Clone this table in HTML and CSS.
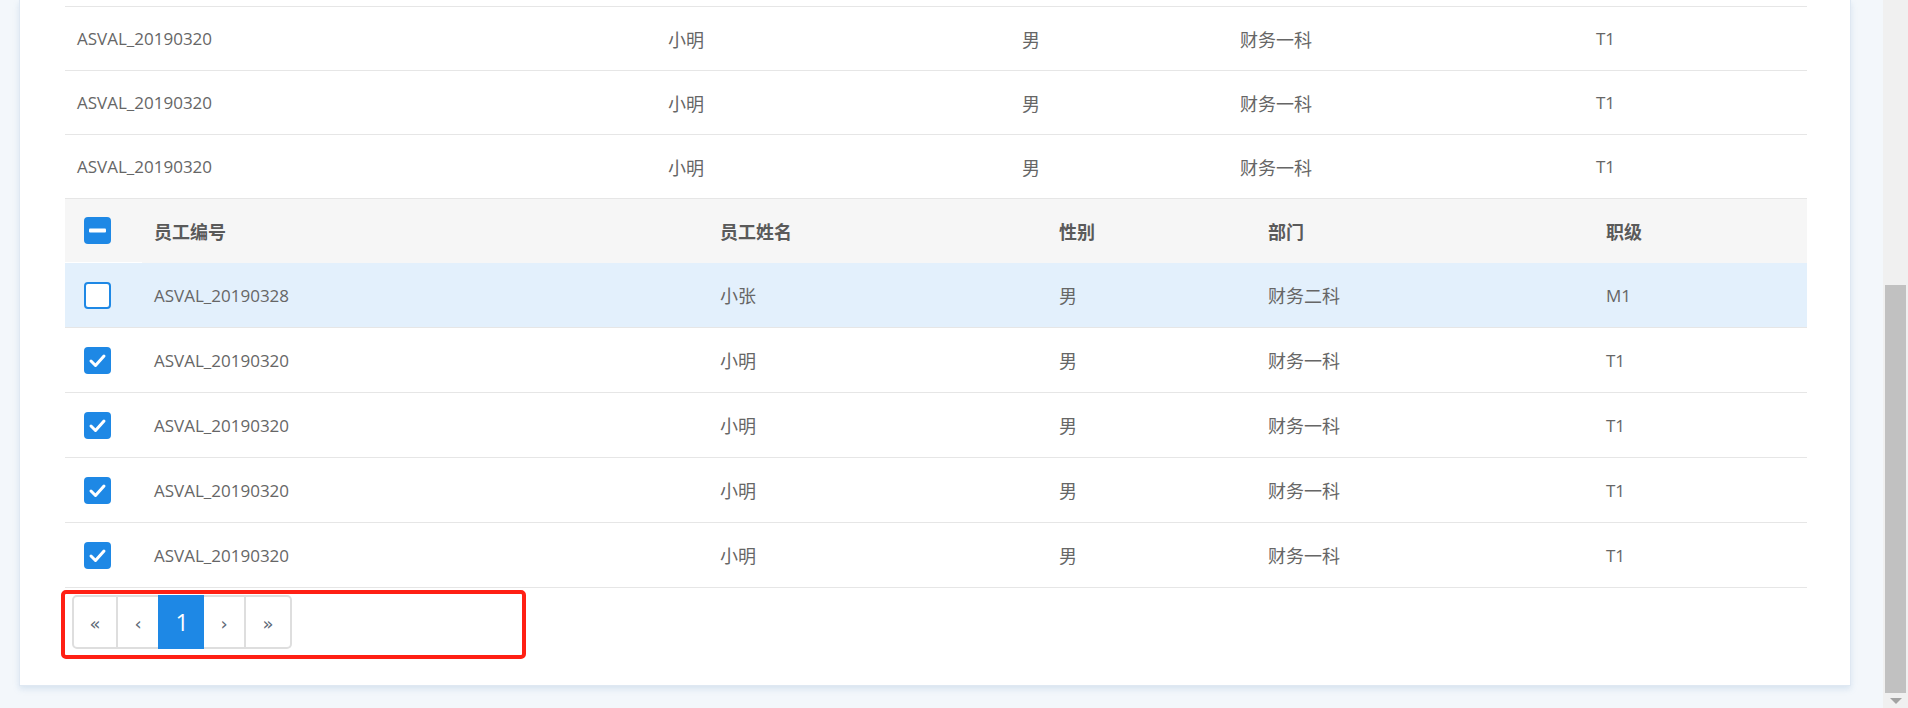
FILE: index.html
```html
<!DOCTYPE html>
<html lang="zh-CN">
<head>
<meta charset="utf-8">
<title>员工列表</title>
<link rel="stylesheet" href="styles.css">
</head>
<body>
<div class="main">
  <div class="card">
    <div class="tbl tbl-plain">
      <div class="row"><div class="cell">ASVAL_20190320</div><div class="cell zh">小明</div><div class="cell zh">男</div><div class="cell zh">财务一科</div><div class="cell">T1</div></div>
      <div class="row"><div class="cell">ASVAL_20190320</div><div class="cell zh">小明</div><div class="cell zh">男</div><div class="cell zh">财务一科</div><div class="cell">T1</div></div>
      <div class="row"><div class="cell">ASVAL_20190320</div><div class="cell zh">小明</div><div class="cell zh">男</div><div class="cell zh">财务一科</div><div class="cell">T1</div></div>
    </div>

    <div class="tbl tbl-check">
      <div class="row head">
        <div class="cell cb-cell"><span class="cb cb-on"><svg viewBox="0 0 27 27" width="27" height="27"><rect x="5" y="11.5" width="17" height="4" rx="1" fill="#fff"/></svg></span></div>
        <div class="cell">员工编号</div><div class="cell">员工姓名</div><div class="cell">性别</div><div class="cell">部门</div><div class="cell">职级</div>
      </div>
      <div class="row sel">
        <div class="cell cb-cell"><span class="cb cb-off"></span></div>
        <div class="cell">ASVAL_20190328</div><div class="cell zh">小张</div><div class="cell zh">男</div><div class="cell zh">财务二科</div><div class="cell">M1</div>
      </div>
      <div class="row">
        <div class="cell cb-cell"><span class="cb cb-on"><svg viewBox="0 0 27 27" width="27" height="27"><path d="M7 14 L11.5 18.5 L20 9" fill="none" stroke="#fff" stroke-width="3" stroke-linecap="round" stroke-linejoin="round"/></svg></span></div>
        <div class="cell">ASVAL_20190320</div><div class="cell zh">小明</div><div class="cell zh">男</div><div class="cell zh">财务一科</div><div class="cell">T1</div>
      </div>
      <div class="row">
        <div class="cell cb-cell"><span class="cb cb-on"><svg viewBox="0 0 27 27" width="27" height="27"><path d="M7 14 L11.5 18.5 L20 9" fill="none" stroke="#fff" stroke-width="3" stroke-linecap="round" stroke-linejoin="round"/></svg></span></div>
        <div class="cell">ASVAL_20190320</div><div class="cell zh">小明</div><div class="cell zh">男</div><div class="cell zh">财务一科</div><div class="cell">T1</div>
      </div>
      <div class="row">
        <div class="cell cb-cell"><span class="cb cb-on"><svg viewBox="0 0 27 27" width="27" height="27"><path d="M7 14 L11.5 18.5 L20 9" fill="none" stroke="#fff" stroke-width="3" stroke-linecap="round" stroke-linejoin="round"/></svg></span></div>
        <div class="cell">ASVAL_20190320</div><div class="cell zh">小明</div><div class="cell zh">男</div><div class="cell zh">财务一科</div><div class="cell">T1</div>
      </div>
      <div class="row">
        <div class="cell cb-cell"><span class="cb cb-on"><svg viewBox="0 0 27 27" width="27" height="27"><path d="M7 14 L11.5 18.5 L20 9" fill="none" stroke="#fff" stroke-width="3" stroke-linecap="round" stroke-linejoin="round"/></svg></span></div>
        <div class="cell">ASVAL_20190320</div><div class="cell zh">小明</div><div class="cell zh">男</div><div class="cell zh">财务一科</div><div class="cell">T1</div>
      </div>
    </div>

    <div class="highlight">
      <div class="pager">
        <span class="pg pg-first">«</span>
        <span class="pg pg-prev">‹</span>
        <span class="pg pg-num active">1</span>
        <span class="pg pg-next">›</span>
        <span class="pg pg-last">»</span>
      </div>
    </div>
  </div>
</div>
<div class="scrollbar">
  <div class="sb-space"></div>
  <div class="sb-thumb"></div>
  <div class="sb-arrow"><span class="tri"></span></div>
</div>
</body>
</html>
```

FILE: styles.css
```css
html, body {
  margin: 0;
  padding: 0;
}
body {
  width: 1908px;
  height: 708px;
  overflow: hidden;
  display: flex;
  background: #f3f7fb;
  font-family: "Open Sans", "Noto Sans CJK SC", sans-serif;
  font-size: 17px;
  color: #666;
}
.main {
  flex: 1;
  padding: 0 32px 0 19px;
}
.card {
  background: #fff;
  border: 1px solid #dfe8f2;
  border-top: none;
  box-shadow: 0 3px 6px rgba(120, 160, 200, 0.22);
  padding: 6px 43px 26px 45px;
}
.tbl {
  width: 1742px;
}
.row {
  display: grid;
  align-items: center;
  box-sizing: border-box;
}
.tbl-plain .row {
  grid-template-columns: 591px 354px 218px 356px 223px;
  height: 64px;
  border-top: 1px solid #e6e6e6;
}
.tbl-check .row {
  grid-template-columns: 77px 566px 339px 209px 338px 213px;
  height: 65px;
  border-bottom: 1px solid #e6e6e6;
}
.tbl-check .row.head {
  border-top: 1px solid #e6e6e6;
  border-bottom: none;
  background: #f6f6f6;
  height: 65px;
  color: #5a5a5a;
}
.tbl-check .row.sel {
  background: #e3f0fc;
}
.cell {
  padding: 0 12px;
  white-space: nowrap;
  font-family: "Open Sans", "Noto Sans CJK SC", sans-serif;
}
.cell.zh {
  font-family: "Noto Sans CJK SC", sans-serif;
  font-size: 18px;
}
.head .cell {
  font-family: "Noto Sans CJK SC", sans-serif;
  font-weight: 700;
  font-size: 18px;
}
.cb-cell {
  padding: 0 0 0 19px;
  display: flex;
  align-items: center;
  height: 100%;
  box-sizing: border-box;
}
.head .cb-cell {
  border-bottom: 1px solid #fff;
}
.cb {
  width: 27px;
  height: 27px;
  box-sizing: border-box;
  border-radius: 4px;
  display: block;
}
.cb svg {
  display: block;
}
.cb-on {
  background: #1e88e5;
}
.cb-off {
  background: #fff;
  border: 2px solid #1e88e5;
}
.highlight {
  margin: 2px 0 0 -4px;
  width: 465px;
  height: 69px;
  box-sizing: border-box;
  border: 4px solid #ff2014;
  border-radius: 5px;
  padding: 1px 7px;
}
.pager {
  display: flex;
  height: 54px;
}
.pg {
  box-sizing: border-box;
  height: 54px;
  display: flex;
  align-items: center;
  justify-content: center;
  border: 2px solid #dedede;
  border-left: none;
  color: #5f6b78;
  font-family: "DejaVu Sans", sans-serif;
  font-size: 18px;
  background: #fff;
  padding-top: 3px;
}
.pg-first {
  width: 46px;
  border-left: 2px solid #dedede;
  border-radius: 5px 0 0 5px;
}
.pg-prev {
  width: 40px;
  border-right: none;
}
.pg-num {
  width: 46px;
}
.pg-next {
  width: 42px;
}
.pg-last {
  width: 46px;
  border-radius: 0 5px 5px 0;
}
.pg.active {
  background: #1e88e5;
  border-color: #1e88e5;
  color: #fff;
  font-family: "Open Sans", sans-serif;
  font-size: 23px;
  padding: 0 0 0 4px;
}
.scrollbar {
  width: 25px;
  background: #f0f0f0;
  display: flex;
  flex-direction: column;
}
.sb-space {
  height: 285px;
}
.sb-thumb {
  height: 408px;
  margin: 0 2px;
  background: #c1c1c1;
}
.sb-arrow {
  flex: 1;
  display: flex;
  justify-content: center;
  align-items: center;
}
.tri {
  width: 0;
  height: 0;
  border-left: 6px solid transparent;
  border-right: 6px solid transparent;
  border-top: 6px solid #a3a3a3;
}
```
